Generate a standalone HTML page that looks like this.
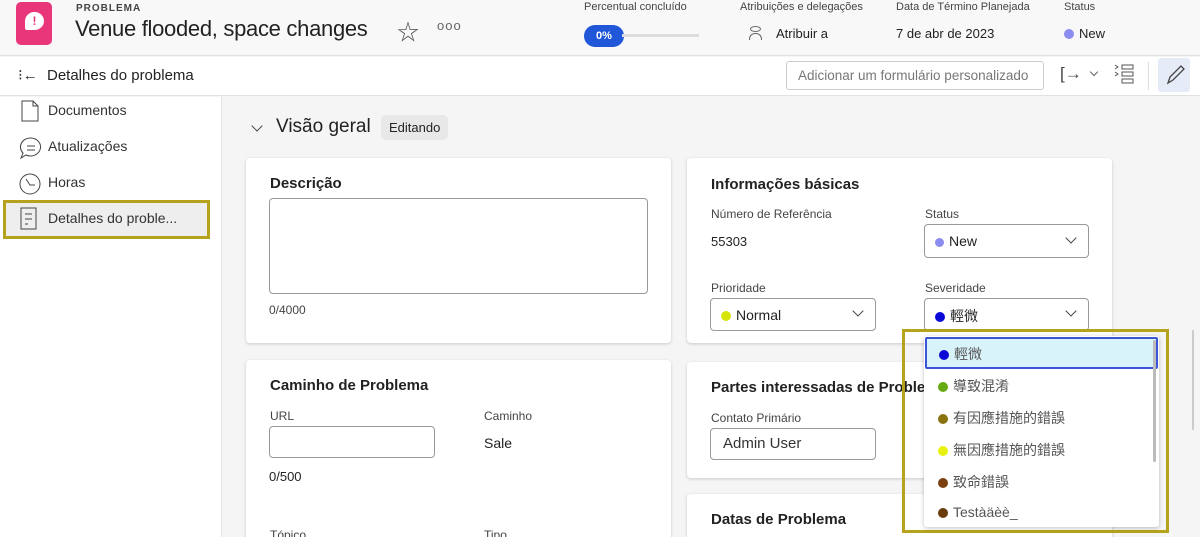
<!DOCTYPE html>
<html><head><meta charset="utf-8"><style>
*{box-sizing:border-box;margin:0;padding:0}
html,body{width:1200px;height:537px;overflow:hidden}
body{background:#f5f5f5;font-family:"Liberation Sans","Noto Sans CJK TC",sans-serif;color:#222;position:relative}
.a{position:absolute;white-space:nowrap}
.card{position:absolute;background:#fff;border-radius:4px;box-shadow:0 1px 3px rgba(0,0,0,.18)}
.h{font-weight:bold;font-size:15px;color:#222}
.lbl{font-size:12px;color:#444}
.inp{position:absolute;border:1px solid #999;border-radius:4px;background:#fff;white-space:nowrap}
.dot{display:inline-block;width:10px;height:10px;border-radius:50%;vertical-align:-1px;margin-right:5px}
.chev{position:absolute;width:8px;height:8px;border-right:1.5px solid #444;border-bottom:1.5px solid #444;transform:rotate(45deg)}
</style></head><body>
<div class="a" style="left:0;top:0;width:1200px;height:56px;background:#f8f8f8;border-bottom:1px solid #e1e1e1"></div>
<div class="a" style="left:16px;top:2px;width:36px;height:43px;background:#e9357a;border-radius:5px"></div>
<div class="a" style="left:25px;top:12px;width:19px;height:18px;background:#fff;border-radius:50% 50% 50% 2px;color:#e9357a;font-size:12px;font-weight:bold;text-align:center;line-height:18px">!</div>
<div class="a" style="left:76px;top:3px;font-size:10px;font-weight:bold;letter-spacing:1px;color:#444">PROBLEMA</div>
<div class="a" style="left:75px;top:16px;font-size:22px;color:#222;letter-spacing:-0.3px">Venue flooded, space changes</div>
<div class="a" style="left:397px;top:15px;font-size:22px;color:#555">☆</div>
<div class="a" style="left:437px;top:18px;font-size:13px;color:#666;letter-spacing:1px">ooo</div>
<div class="a lbl" style="left:584px;top:1px;font-size:11px">Percentual concluído</div>
<div class="a" style="left:584px;top:25px;width:40px;height:22px;border-radius:11px;background:#1f57d8;color:#fff;font-size:11px;font-weight:bold;text-align:center;line-height:22px">0%</div>
<div class="a" style="left:622px;top:34px;width:77px;height:3px;background:#ddd"></div>
<div class="a lbl" style="left:740px;top:1px;font-size:11px">Atribuições e delegações</div>
<div class="a" style="left:750px;top:26px;width:11px;height:6px;border:1.3px solid #666;border-radius:50%"></div>
<div class="a" style="left:749px;top:33px;width:13px;height:7px;border:1.3px solid #666;border-bottom:none;border-radius:6px 6px 0 0"></div>
<div class="a" style="left:776px;top:26px;font-size:13px">Atribuir a</div>
<div class="a lbl" style="left:896px;top:1px;font-size:11px">Data de Término Planejada</div>
<div class="a" style="left:896px;top:26px;font-size:13px">7 de abr de 2023</div>
<div class="a lbl" style="left:1064px;top:1px;font-size:11px">Status</div>
<div class="a" style="left:1064px;top:26px;font-size:13px"><span class="dot" style="background:#8b8cf0"></span>New</div>
<div class="a" style="left:0;top:57px;width:1200px;height:39px;background:#fff;border-bottom:1px solid #e1e1e1"></div>
<div class="a" style="left:18px;top:66px;font-size:15px;color:#333">⁝←</div>
<div class="a" style="left:47px;top:67px;font-size:15px">Detalhes do problema</div>
<div class="a" style="left:786px;top:61px;width:258px;height:29px;border:1px solid #ccc;border-radius:3px;font-size:13.5px;color:#777;padding:6px 11px;overflow:hidden">Adicionar um formulário personalizado</div>
<div class="a" style="left:1060px;top:64px;font-size:17px;color:#444">[→</div>
<div class="chev" style="left:1091px;top:69px;width:6px;height:6px;border-color:#666"></div>
<div class="a" style="left:1113px;top:63px;width:22px;height:22px"><svg width="22" height="22"><g stroke="#555" fill="none"><rect x="9" y="2" width="11" height="4"/><rect x="9" y="9" width="11" height="4"/><rect x="9" y="16" width="11" height="4"/><path d="M2 2l3 2l-3 2M2 9l3 2l-3 2"/></g></svg></div>
<div class="a" style="left:1148px;top:62px;width:1px;height:28px;background:#ddd"></div>
<div class="a" style="left:1158px;top:58px;width:32px;height:34px;background:#e5ecf7;border-radius:3px"></div>
<div class="a" style="left:1164px;top:63px"><svg width="22" height="24"><path d="M4 20l2-6l11-11l3 3l-11 11z M4 20l5-3" stroke="#444" fill="none" stroke-width="1.3"/></svg></div>
<div class="a" style="left:0;top:97px;width:222px;height:440px;background:#fff;border-right:1px solid #e4e4e4"></div>
<svg class="a" style="left:20px;top:100px" width="22" height="22"><path d="M2 1h11l5 5v15h-16z M13 1v5h5" stroke="#444" fill="none"/></svg>
<div class="a" style="left:48px;top:102px;font-size:14px;color:#333">Documentos</div>
<svg class="a" style="left:19px;top:136px" width="24" height="24"><path d="M12 2a10 9 0 1 1-5 17l-5 3l2-5a10 9 0 0 1 8-15z M8 10h8M8 14h8" stroke="#444" fill="none"/></svg>
<div class="a" style="left:48px;top:138px;font-size:14px;color:#333">Atualizações</div>
<svg class="a" style="left:18px;top:172px" width="24" height="24"><circle cx="12" cy="12" r="10" stroke="#444" fill="none"/><path d="M8 7l4 6h5" stroke="#444" fill="none"/></svg>
<div class="a" style="left:48px;top:174px;font-size:14px;color:#333">Horas</div>
<div class="a" style="left:3px;top:200px;width:207px;height:39px;border:3px solid #b5a21d;background:#eee"></div>
<svg class="a" style="left:20px;top:207px" width="20" height="24"><path d="M1 1h15v21h-15z M5 7h7M5 12h7M5 17h3" stroke="#444" fill="none"/></svg>
<div class="a" style="left:48px;top:210px;font-size:14px;color:#333">Detalhes do proble...</div>
<div class="chev" style="left:253px;top:122px;border-color:#444"></div>
<div class="a" style="left:276px;top:116px;font-size:19px;color:#222">Visão geral</div>
<div class="a" style="left:381px;top:115px;height:25px;padding:0 8px;background:#e8e8e8;border-radius:5px;font-size:13px;line-height:25px">Editando</div>
<div class="card" style="left:246px;top:158px;width:425px;height:185px"></div>
<div class="a h" style="left:270px;top:175px">Descrição</div>
<div class="inp" style="left:269px;top:198px;width:379px;height:96px"></div>
<div class="a lbl" style="left:269px;top:303px">0/4000</div>
<div class="card" style="left:246px;top:360px;width:425px;height:200px"></div>
<div class="a h" style="left:270px;top:377px">Caminho de Problema</div>
<div class="a lbl" style="left:270px;top:409px">URL</div>
<div class="inp" style="left:269px;top:426px;width:166px;height:32px"></div>
<div class="a" style="left:269px;top:469px;font-size:13px">0/500</div>
<div class="a lbl" style="left:484px;top:409px">Caminho</div>
<div class="a" style="left:484px;top:435px;font-size:14px">Sale</div>
<div class="a lbl" style="left:270px;top:528px">Tópico</div>
<div class="a lbl" style="left:484px;top:528px">Tipo</div>
<div class="card" style="left:687px;top:158px;width:425px;height:185px"></div>
<div class="a h" style="left:711px;top:176px">Informações básicas</div>
<div class="a lbl" style="left:711px;top:207px">Número de Referência</div>
<div class="a" style="left:711px;top:234px;font-size:13px">55303</div>
<div class="a lbl" style="left:925px;top:207px">Status</div>
<div class="inp" style="left:924px;top:224px;width:165px;height:34px;font-size:14px;padding:8px 10px"><span class="dot" style="background:#8b8cf0;width:9px;height:9px"></span>New</div>
<div class="chev" style="left:1067px;top:234px"></div>
<div class="a lbl" style="left:711px;top:281px">Prioridade</div>
<div class="inp" style="left:710px;top:298px;width:166px;height:33px;font-size:14px;padding:8px 10px"><span class="dot" style="background:#d6e40a"></span>Normal</div>
<div class="chev" style="left:854px;top:307px"></div>
<div class="a lbl" style="left:925px;top:281px">Severidade</div>
<div class="inp" style="left:924px;top:298px;width:165px;height:33px;font-size:14px;padding:7px 10px"><span class="dot" style="background:#0a0ad6"></span>輕微</div>
<div class="chev" style="left:1067px;top:307px"></div>
<div class="card" style="left:687px;top:362px;width:425px;height:116px"></div>
<div class="a h" style="left:711px;top:379px">Partes interessadas de Problema</div>
<div class="a lbl" style="left:711px;top:411px">Contato Primário</div>
<div class="inp" style="left:710px;top:428px;width:166px;height:32px;font-size:15px;padding:6px 12px;color:#333">Admin User</div>
<div class="card" style="left:687px;top:494px;width:425px;height:60px"></div>
<div class="a h" style="left:711px;top:511px">Datas de Problema</div>
<div class="a" style="left:1192px;top:330px;width:2px;height:100px;background:#ccc"></div>
<div class="a" style="left:902px;top:329px;width:267px;height:204px;border:3px solid #b5a21d;background:transparent"></div>
<div class="a" style="left:924px;top:336px;width:235px;height:191px;background:#fff;border-radius:3px;box-shadow:0 1px 4px rgba(0,0,0,.25);font-size:14px;color:#555;overflow:hidden">
 <div style="height:32px;margin:1px;background:#d8f4fa;border:2px solid #3b55d8;border-radius:2px;padding:5px 12px"><span class="dot" style="background:#0a0ad6"></span>輕微</div>
 <div style="height:32px;padding:6px 14px"><span class="dot" style="background:#66aa11"></span>導致混淆</div>
 <div style="height:32px;padding:6px 14px"><span class="dot" style="background:#8a7412"></span>有因應措施的錯誤</div>
 <div style="height:32px;padding:6px 14px"><span class="dot" style="background:#e8f010"></span>無因應措施的錯誤</div>
 <div style="height:32px;padding:6px 14px"><span class="dot" style="background:#7a4010"></span>致命錯誤</div>
 <div style="height:32px;padding:6px 14px"><span class="dot" style="background:#6a3c0c"></span>Testàäèè_</div>
 <div class="a" style="left:229px;top:4px;width:3px;height:122px;background:#bbb;border-radius:2px"></div>
</div>
</body></html>
